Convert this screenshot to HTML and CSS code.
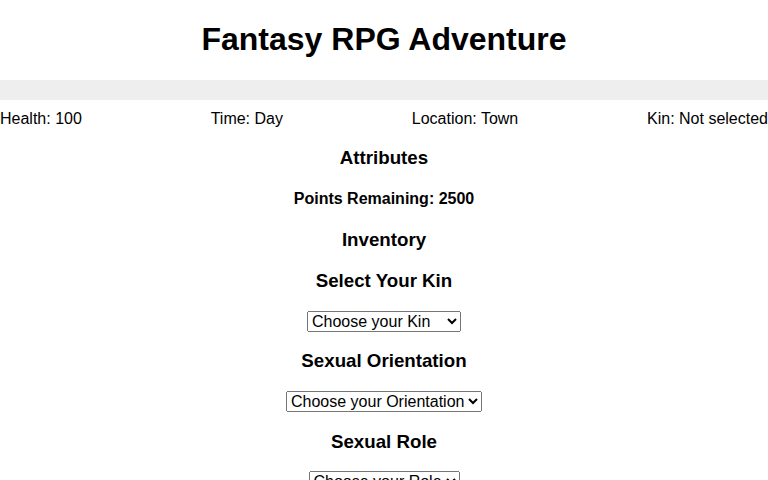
FILE: index.html
```html
<!DOCTYPE html>
<html lang="en">
<head>
    <meta charset="UTF-8">
    <meta name="viewport" content="width=device-width, initial-scale=1.0">
    <title>Fantasy RPG Adventure</title>
    <link rel="stylesheet" href="styles.css">
</head>
<body>
    <h1>Fantasy RPG Adventure</h1>

    <div class="story-bar"></div>

    <div class="stats">
        <div>Health: <span id="health">100</span></div>
        <div>Time: <span id="time">Day</span></div>
        <div>Location: <span id="location">Town</span></div>
        <div>Kin: <span id="kin">Not selected</span></div>
    </div>

    <div class="attributes">
        <h3>Attributes</h3>
        <h4>Points Remaining: <span id="points">2500</span></h4>
    </div>

    <div class="inventory">
        <h3>Inventory</h3>
    </div>

    <div class="choice">
        <h3>Select Your Kin</h3>
        <div>
            <select id="kin-select" class="kin-select">
                <option value="">Choose your Kin</option>
                <option>Human</option>
                <option>Elf</option>
                <option>Dwarf</option>
                <option>Orc</option>
            </select>
        </div>
    </div>

    <div class="choice">
        <h3>Sexual Orientation</h3>
        <div>
            <select id="orientation-select">
                <option value="">Choose your Orientation</option>
                <option>Straight</option>
                <option>Gay</option>
                <option>Bisexual</option>
            </select>
        </div>
    </div>

    <div class="choice">
        <h3>Sexual Role</h3>
        <div>
            <select id="role-select">
                <option value="">Choose your Role</option>
                <option>Top</option>
                <option>Bottom</option>
                <option>Versatile</option>
            </select>
        </div>
    </div>
</body>
</html>
```

FILE: styles.css
```css
body {
    font-family: 'Liberation Sans', Arial, sans-serif;
    margin: 0;
    text-align: center;
    color: #000;
    background: #fff;
}
h1 {
    font-size: 32px;
}
.story-bar {
    height: 20px;
    background-color: #eee;
}
.stats {
    display: flex;
    justify-content: space-between;
    margin: 10px 0;
}
select {
    font-family: 'Liberation Sans', Arial, sans-serif;
    font-size: 16px;
}
.kin-select {
    width: 154px;
}
```
